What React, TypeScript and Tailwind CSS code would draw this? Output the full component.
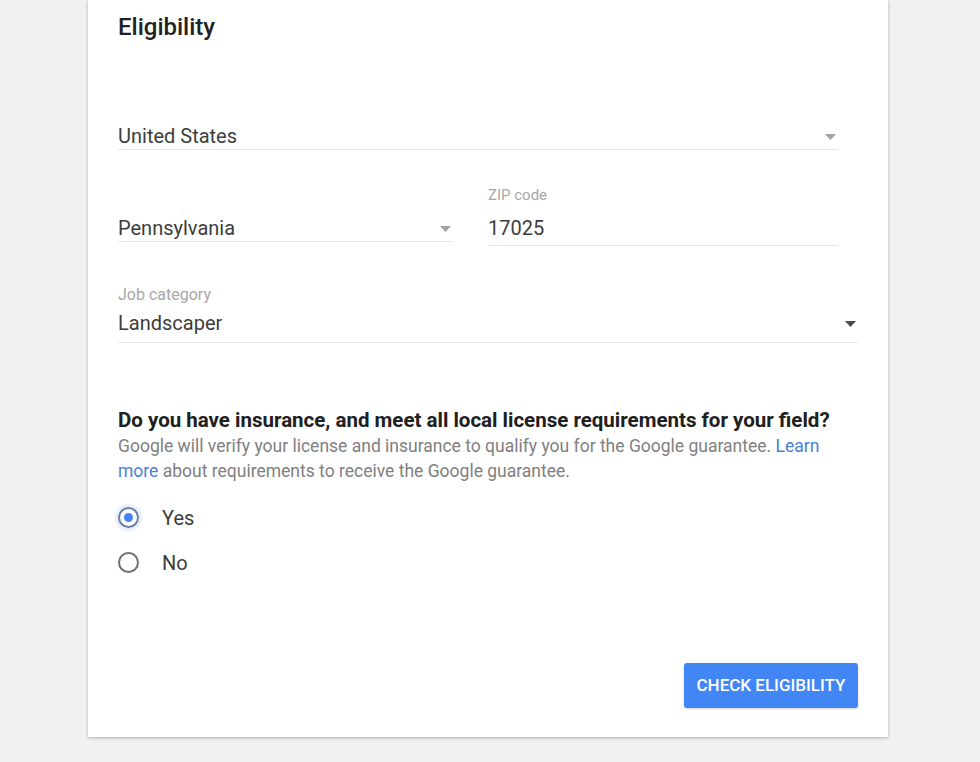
import React from 'react';

const font = { fontFamily: 'Roboto, "Noto Sans", Arial, sans-serif' };

function Caret({ dark = false }: { dark?: boolean }) {
  return (
    <svg width="11" height="6" viewBox="0 0 11 6" className="shrink-0">
      <path d="M0 0h11L5.5 6z" fill={dark ? '#4a4a4a' : '#a3a3a3'} />
    </svg>
  );
}

function SelectField({ value, dark, className = '' }: { value: string; dark?: boolean; className?: string }) {
  return (
    <div className={`flex items-center justify-between border-b border-[#e6e6e6] ${className}`}>
      <span className="text-[20px] leading-[25px] text-[#3d3d3d]">{value}</span>
      <span className="pr-[2px]">
        <Caret dark={dark} />
      </span>
    </div>
  );
}

function Radio({ label, checked }: { label: string; checked?: boolean }) {
  return (
    <label className="flex h-[45px] items-center gap-[23px]">
      <span
        className={`flex h-[21px] w-[21px] items-center justify-center rounded-full border-2 ${
          checked ? 'border-[#6a7fa8] shadow-[0_0_0_3px_rgba(66,133,244,0.12)]' : 'border-[#707070]'
        }`}
      >
        {checked && <span className="h-[9px] w-[9px] rounded-full bg-[#4285f4]" />}
      </span>
      <span className="text-[20px] text-[#3d3d3d]">{label}</span>
    </label>
  );
}

export default function App() {
  return (
    <div className="min-h-[762px] bg-[#f1f1f1]" style={font}>
      <div className="ml-[88px] w-[800px] bg-white px-[30px] pt-[11px] pb-[29px] shadow-[0_1px_3px_rgba(0,0,0,0.28)]">
        <h2 className="h-[32px] text-[24px] font-medium leading-[32px] text-[#222]">Eligibility</h2>

        <SelectField value="United States" className="mt-[81px] mr-[20px]" />

        <div className="mt-[36px] flex items-start gap-[35px]">
          <SelectField value="Pennsylvania" className="w-[335px] mt-[30px]" />
          <div className="w-[350px]">
            <div className="text-[15px] leading-[18px] text-[#a8a8a8]">ZIP code</div>
            <div className="mt-[12px] border-b border-[#e6e6e6] pb-[4px] text-[20px] leading-[25px] text-[#3d3d3d]">
              17025
            </div>
          </div>
        </div>

        <div className="mt-[40px]">
          <div className="text-[16px] leading-[18px] text-[#a8a8a8]">Job category</div>
          <SelectField value="Landscaper" dark className="mt-[7px] pb-[6px]" />
        </div>

        <h3 className="mt-[65px] text-[20.5px] font-bold leading-[25px] text-[#202020]">
          Do you have insurance, and meet all local license requirements for your field?
        </h3>
        <p className="mt-[1px] text-[17.5px] leading-[25px] text-[#808080]">
          Google will verify your license and insurance to qualify you for the Google guarantee.{' '}
          <a className="text-[#4a7fd8]">
            Learn
            <br />
            more
          </a>{' '}
          about requirements to receive the Google guarantee.
        </p>

        <div className="mt-[11px] flex flex-col">
          <Radio label="Yes" checked />
          <Radio label="No" />
        </div>

        <div className="mt-[78px] flex justify-end">
          <button className="h-[45px] w-[174px] rounded-[3px] bg-[#4285f4] text-[17px] font-medium uppercase text-white shadow-[0_1px_2px_rgba(0,0,0,0.2)]">
            Check Eligibility
          </button>
        </div>
      </div>
    </div>
  );
}
